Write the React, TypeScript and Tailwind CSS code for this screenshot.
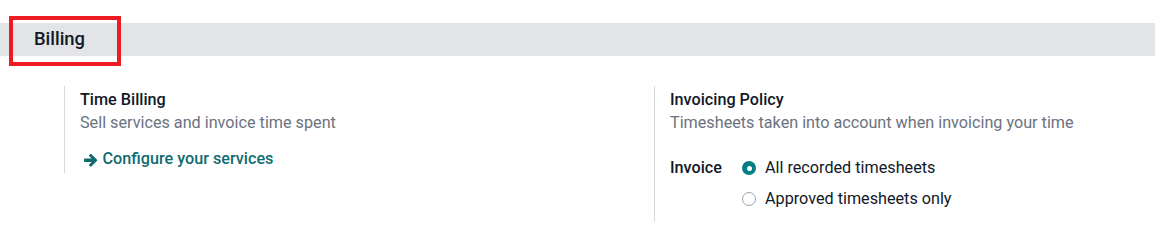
import React from 'react';

const ArrowRight: React.FC<{ className?: string }> = ({ className }) => (
  <svg viewBox="0 0 14 13" className={className} fill="currentColor">
    <path d="M0.8 4.7h7.1L5.6 2.4c-.5-.5-.5-1.2 0-1.6l.6-.6c.5-.5 1.2-.5 1.6 0l5.5 5.5c.5.5.5 1.2 0 1.6l-5.5 5.5c-.5.5-1.2.5-1.6 0l-.6-.6c-.5-.5-.5-1.2 0-1.6l2.3-2.3H0.8c-.5 0-.8-.4-.8-.8V5.5c0-.5.3-.8.8-.8z" />
  </svg>
);

const Radio: React.FC<{ checked?: boolean; label: string }> = ({ checked, label }) => (
  <label className="flex items-center h-[22.5px] gap-[9px]">
    {checked ? (
      <span className="w-[14px] h-[14px] rounded-full bg-[#017e84] flex items-center justify-center">
        <span className="w-[5px] h-[5px] rounded-full bg-white" />
      </span>
    ) : (
      <span className="w-[14px] h-[14px] rounded-full border border-[#9ca3af] bg-white" />
    )}
    <span className="text-[#111827]">{label}</span>
  </label>
);

const App: React.FC = () => {
  return (
    <div className="w-[1155px] h-[237px] overflow-hidden bg-white font-['Roboto',sans-serif] text-[16.2px] leading-[22.5px]">
      <div className="pt-[23px]">
        {/* Section header */}
        <div className="relative h-[33px] bg-[#e2e4e8] flex items-center pl-[34px]">
          <h2 className="text-[18.4px] font-medium text-[#111827]">Billing</h2>
          <div className="absolute left-[9px] top-[-7px] w-[112px] h-[50px] border-4 border-[#ed1c24]" />
        </div>

        {/* Settings */}
        <div className="grid grid-cols-[590px_1fr] items-start pl-[64px] mt-[30px]">
          <div className="border-l border-[#d8dadd] pl-[15px] pt-[3px] pb-[2px]">
            <div className="font-medium text-[#111827]">Time Billing</div>
            <div className="text-[#6b7280]">Sell services and invoice time spent</div>
            <a className="mt-[14px] ml-[4px] flex items-center gap-[5px] font-medium text-[#0f6b71]">
              <ArrowRight className="w-[13.5px] h-[12.5px] mt-[2px]" />
              Configure your services
            </a>
          </div>

          <div className="border-l border-[#d8dadd] pl-[15px] pt-[3px] pb-[12px]">
            <div className="font-medium text-[#111827]">Invoicing Policy</div>
            <div className="text-[#6b7280]">Timesheets taken into account when invoicing your time</div>
            <div className="mt-[23px] flex">
              <div className="w-[72px] font-medium text-[#111827]">Invoice</div>
              <div className="flex flex-col gap-[8px]">
                <Radio checked label="All recorded timesheets" />
                <Radio label="Approved timesheets only" />
              </div>
            </div>
          </div>
        </div>
      </div>
    </div>
  );
};

export default App;
